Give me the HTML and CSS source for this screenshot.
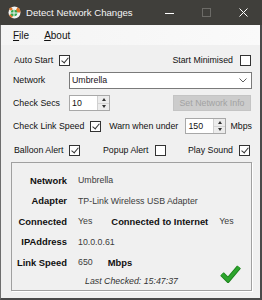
FILE: index.html
```html
<html lang="en">
<head>
    <meta charset="UTF-8">
    <title>Detect Network Changes</title>
    <link rel="stylesheet" href="styles.css">
</head>
<body>
<div class="window">
    <div class="titlebar">
        <svg class="app-icon" width="13" height="13" viewBox="0 0 13 13">
            <circle cx="6.5" cy="6.5" r="6" fill="#f4f4f4"/>
            <path d="M6.5 6.5 L12.5 6.5 A6 6 0 0 0 9.5 1.3 Z" fill="#e0782a"/>
            <path d="M6.5 6.5 L1 9 A6 6 0 0 0 4 12 Z" fill="#e0782a"/>
            <circle cx="3" cy="3" r="1.6" fill="#e0782a"/>
            <circle cx="6" cy="7" r="3.3" fill="#2fa84a"/>
            <path d="M2.5 7 H9.5 M6 3.5 V10.5" stroke="#f4f4f4" stroke-width="1"/>
        </svg>
        <span class="title">Detect Network Changes</span>
        <div class="caption-buttons">
            <span class="cap"><svg width="10" height="10" viewBox="0 0 10 10"><path d="M0 5.5 H9" stroke="#fff" stroke-width="1"/></svg></span>
            <span class="cap"><svg width="10" height="10" viewBox="0 0 10 10"><rect x="0.5" y="0.5" width="8" height="8" fill="none" stroke="#6c6b67" stroke-width="1"/></svg></span>
            <span class="cap"><svg width="10" height="10" viewBox="0 0 10 10"><path d="M0.5 0.5 L8.5 8.5 M8.5 0.5 L0.5 8.5" stroke="#fff" stroke-width="1"/></svg></span>
        </div>
    </div>

    <div class="menubar">
        <span class="menu"><u>F</u>ile</span>
        <span class="menu"><u>A</u>bout</span>
    </div>

    <div class="content">
        <div class="row row-first">
            <span class="lbl w-auto">Auto Start</span>
            <span class="cb checked"></span>
            <span class="lbl push-right">Start Minimised</span>
            <span class="cb gap-left"></span>
        </div>

        <div class="row">
            <span class="lbl w-net">Network</span>
            <div class="combo">
                <span>Umbrella</span>
                <svg width="8" height="5" viewBox="0 0 8 5"><path d="M0.5 0.5 L4 4 L7.5 0.5" fill="none" stroke="#606060" stroke-width="1"/></svg>
            </div>
        </div>

        <div class="row row-secs">
            <span class="lbl w-net">Check Secs</span>
            <div class="spin spin-secs">
                <span class="spin-value">10</span>
                <span class="spin-arrows">
                    <span class="arrow up"></span>
                    <span class="arrow down"></span>
                </span>
            </div>
            <span class="btn-disabled">Set Network Info</span>
        </div>

        <div class="row row-speed">
            <span class="lbl w-link">Check Link Speed</span>
            <span class="cb checked"></span>
            <span class="lbl w-warn">Warn when under</span>
            <div class="spin spin-mbps">
                <span class="spin-value">150</span>
                <span class="spin-arrows">
                    <span class="arrow up"></span>
                    <span class="arrow down"></span>
                </span>
            </div>
            <span class="lbl mbps">Mbps</span>
        </div>

        <div class="row row-alerts">
            <span class="lbl w-balloon">Balloon Alert</span>
            <span class="cb checked"></span>
            <span class="lbl w-popup">Popup Alert</span>
            <span class="cb"></span>
            <span class="lbl w-sound">Play Sound</span>
            <span class="cb checked"></span>
        </div>

        <div class="status">
            <div class="srow">
                <span class="skey">Network</span>
                <span class="sval">Umbrella</span>
            </div>
            <div class="srow">
                <span class="skey">Adapter</span>
                <span class="sval">TP-Link Wireless USB Adapter</span>
            </div>
            <div class="srow">
                <span class="skey">Connected</span>
                <span class="sval">Yes</span>
                <span class="skey inline internet">Connected to Internet</span>
                <span class="sval yes2">Yes</span>
            </div>
            <div class="srow">
                <span class="skey">IPAddress</span>
                <span class="sval">10.0.0.61</span>
            </div>
            <div class="srow">
                <span class="skey">Link Speed</span>
                <span class="sval">650</span>
                <span class="skey inline unit">Mbps</span>
            </div>
            <div class="last-checked">Last Checked: 15:47:37</div>
            <svg class="ok-mark" width="21" height="19" viewBox="0 0 21 19">
                <path d="M2 10 L8 16 L19 3" fill="none" stroke="#1c7f1c" stroke-width="5" stroke-linejoin="miter"/>
                <path d="M2 10 L8 16 L19 3" fill="none" stroke="#2da52d" stroke-width="3.2" stroke-linejoin="miter"/>
            </svg>
        </div>
    </div>
</div>
</body>
</html>
```

FILE: styles.css
```css
* {
    margin: 0;
    padding: 0;
    box-sizing: border-box;
}

body {
    font-family: "Liberation Sans", Arial, sans-serif;
    font-size: 8.8px;
    color: #111;
    background: #f0f0f0;
}

.window {
    width: 262px;
    height: 300px;
    display: flex;
    flex-direction: column;
    background: #f0f0f0;
    border-left: 1px solid #6e6e6e;
    border-right: 2px solid #4a4a4a;
    border-bottom: 2px solid #4a4a4a;
}

/* Title bar */
.titlebar {
    height: 25px;
    display: flex;
    align-items: center;
    background: #403f3b;
    color: #fff;
    margin-left: -1px;
    margin-right: -2px;
}

.app-icon {
    margin-left: 8px;
    margin-right: 5px;
}

.title {
    font-size: 9.6px;
    color: #f4f4f4;
}

.caption-buttons {
    margin-left: auto;
    display: flex;
}

.cap {
    width: 37px;
    height: 25px;
    display: flex;
    align-items: center;
    justify-content: center;
}

/* Menu */
.menubar {
    height: 20px;
    display: flex;
    align-items: center;
    background: linear-gradient(to right, #f4f4f4, #fafafa);
    padding-left: 12px;
}

.menu {
    font-size: 10px;
    margin-right: 15px;
}

.menu u {
    text-decoration-thickness: 1px;
    text-underline-offset: 1px;
}

/* Main form */
.content {
    padding: 0 8px 0 12px;
}

.row {
    height: 20px;
    display: flex;
    align-items: center;
}

.row-first {
    margin-top: 5px;
}

.row-secs {
    margin-top: 3px;
}

.row-speed {
    margin-top: 3px;
}

.row-alerts {
    margin-top: 4px;
}

.lbl {
    white-space: nowrap;
}

.w-auto {
    width: 46px;
    padding-left: 1px;
}

.push-right {
    margin-left: auto;
}

.gap-left {
    margin-left: 7px;
    margin-right: 1px;
}

.w-net {
    width: 56px;
}

.w-link {
    width: 79px;
}

.w-warn {
    width: 78px;
    margin-left: 8px;
}

.mbps {
    margin-left: 4px;
}

.w-balloon {
    width: 56px;
    padding-left: 1px;
}

.w-popup {
    width: 52px;
    margin-left: 23px;
}

.w-sound {
    width: 51px;
    margin-left: 22px;
}

/* Check boxes */
.cb {
    width: 11px;
    height: 11px;
    border: 1px solid #333;
    background: #fff;
    flex-shrink: 0;
    position: relative;
}

.cb.checked::after {
    content: "";
    position: absolute;
    left: 3px;
    top: 0px;
    width: 3px;
    height: 6px;
    border-right: 1px solid #333;
    border-bottom: 1px solid #333;
    transform: rotate(40deg);
}

/* Combo box */
.combo {
    flex: 1;
    height: 17px;
    border: 1px solid #7a7a7a;
    background: #fff;
    display: flex;
    align-items: center;
    justify-content: space-between;
    padding: 0 4px 0 2px;
    color: #1a1020;
}

/* Numeric up-down */
.spin {
    height: 16px;
    display: flex;
    border: 1px solid #a8a8a8;
    background: #fff;
}

.spin-secs {
    width: 41px;
}

.spin-mbps {
    width: 42px;
}

.spin-value {
    flex: 1;
    padding-left: 2px;
    line-height: 14px;
    color: #111;
}

.spin-arrows {
    width: 12px;
    display: flex;
    flex-direction: column;
    border-left: 1px solid #d0d0d0;
    background: #ececec;
}

.arrow {
    flex: 1;
    display: flex;
    align-items: center;
    justify-content: center;
}

.arrow.up {
    border-bottom: 1px solid #d4d4d4;
}

.arrow::before {
    content: "";
    width: 0;
    height: 0;
    border-left: 2.5px solid transparent;
    border-right: 2.5px solid transparent;
}

.arrow.up::before {
    border-bottom: 3px solid #333;
}

.arrow.down::before {
    border-top: 3px solid #333;
}

.btn-disabled {
    margin-left: auto;
    margin-right: 1px;
    width: 78px;
    height: 16px;
    background: #cccccc;
    border: 1px solid #c4c4c4;
    color: #a2a2a2;
    display: flex;
    align-items: center;
    justify-content: center;
    white-space: nowrap;
}

/* Status panel */
.status {
    position: relative;
    margin: 2px 0 0 -2px;
    width: 241px;
    height: 129px;
    border: 1px solid #a0a0a0;
    box-shadow: 1px 1px 0 #fff;
    padding-top: 7px;
}

.srow {
    height: 20.5px;
    display: flex;
    align-items: center;
}

.skey {
    width: 55px;
    text-align: right;
    font-weight: bold;
    font-size: 9.4px;
    color: #111;
    white-space: nowrap;
}

.skey.inline {
    width: auto;
    text-align: left;
}

.sval {
    margin-left: 11px;
    color: #3c3c3c;
    white-space: nowrap;
}

.internet {
    margin-left: 19px;
}

.yes2 {
    margin-left: 11px;
}

.unit {
    margin-left: 15px;
}

.last-checked {
    margin-top: 3px;
    text-align: center;
    font-style: italic;
    color: #333;
}

.ok-mark {
    position: absolute;
    left: 208px;
    top: 101px;
}
```
